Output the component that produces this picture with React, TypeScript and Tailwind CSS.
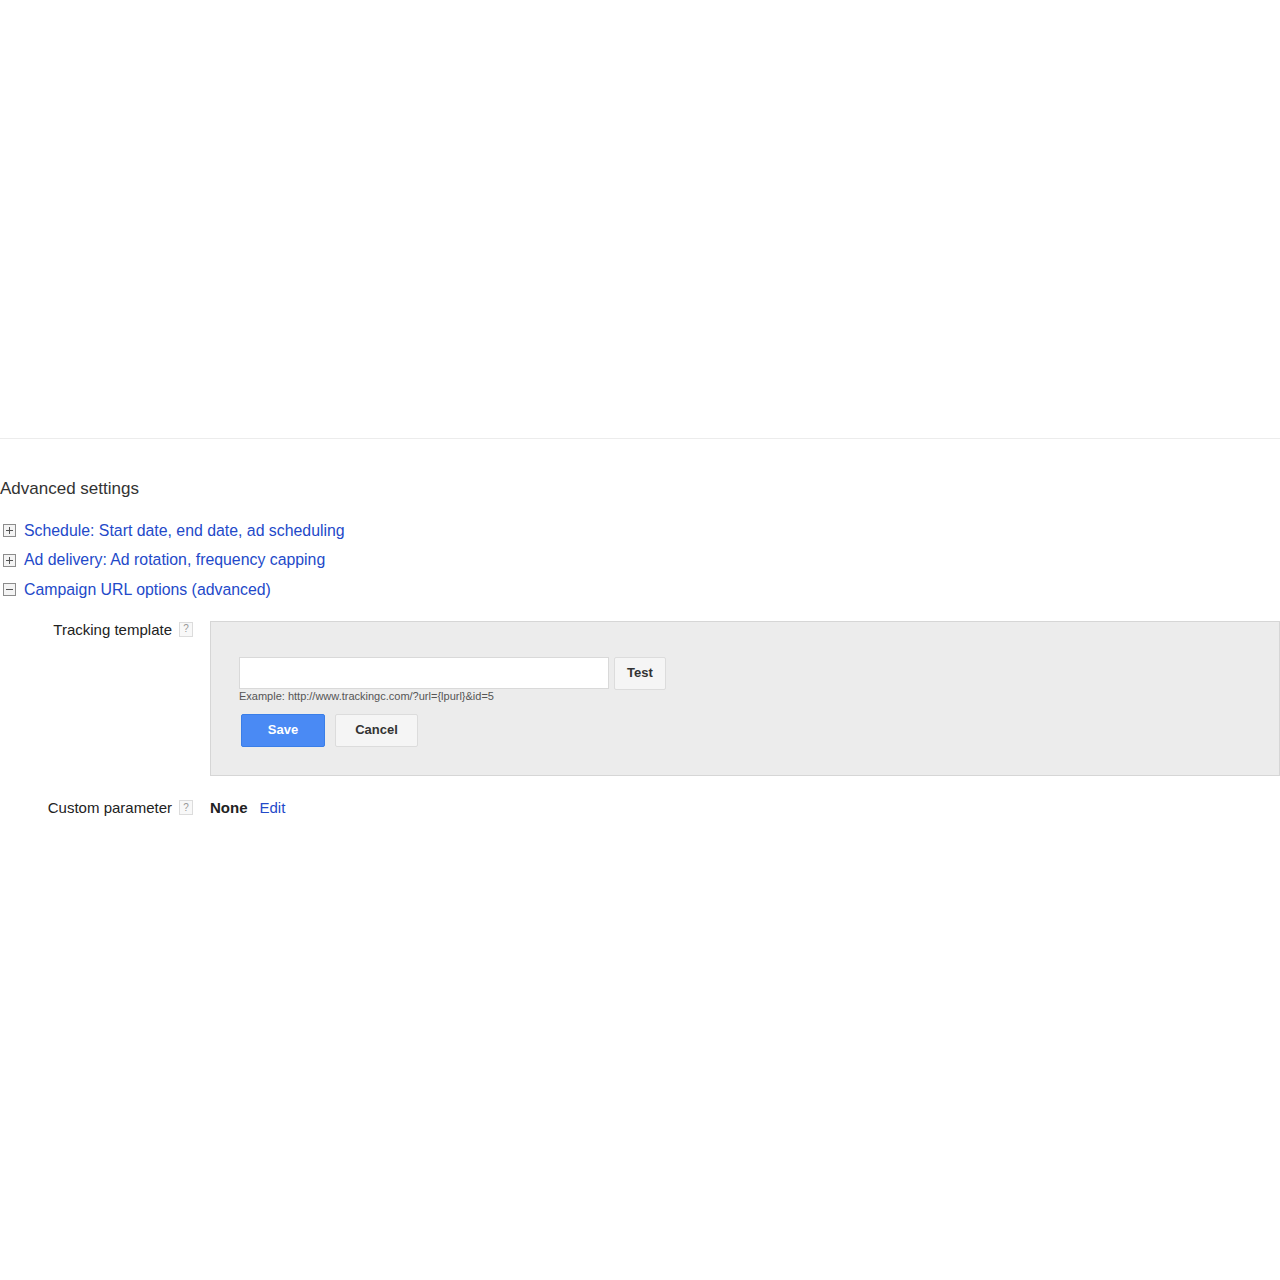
const font = { fontFamily: '"Liberation Sans", Arial, sans-serif' };

const Toggle = ({ open }: { open?: boolean }) => (
  <svg width="13" height="13" viewBox="0 0 13 13" className="shrink-0">
    <rect x="0.5" y="0.5" width="12" height="12" fill="#f4f4f4" stroke="#8c8c8c" />
    <line x1="3" y1="6.5" x2="10" y2="6.5" stroke="#555" strokeWidth="1" />
    {!open && <line x1="6.5" y1="3" x2="6.5" y2="10" stroke="#555" strokeWidth="1" />}
  </svg>
);

const Help = () => (
  <span className="inline-flex h-[15px] w-[14px] items-center justify-center border border-[#dcdcdc] bg-[#f8f8f8] text-[10px] leading-none text-[#999]">
    ?
  </span>
);

const Btn = ({ children, primary, w }: { children: string; primary?: boolean; w: string }) => (
  <button
    className={
      primary
        ? `h-[33px] ${w} rounded-[2px] border border-[#3a7ee8] bg-[#4a8af4] text-[13px] font-bold text-white`
        : `h-[33px] ${w} rounded-[2px] border border-[#dcdcdc] bg-[#f5f5f5] text-[13px] font-bold text-[#333]`
    }
  >
    {children}
  </button>
);

export default function App() {
  return (
    <div className="min-h-[1280px] bg-white text-[#222]" style={font}>
      <div className="h-[438px]" />
      <div className="h-px bg-[#ececec]" />

      <h2 className="mt-[40px] text-[17px] leading-[20px] text-[#333]">Advanced settings</h2>

      <div className="mt-[17px] flex flex-col">
        {[
          ['Schedule: Start date, end date, ad scheduling', false],
          ['Ad delivery: Ad rotation, frequency capping', false],
          ['Campaign URL options (advanced)', true],
        ].map(([t, o]) => (
          <div key={t as string} className="flex h-[29.5px] items-center gap-[8px] pl-[3px]">
            <Toggle open={o as boolean} />
            <a className="text-[15.85px] leading-[20px] text-[#2349c9]">{t as string}</a>
          </div>
        ))}
      </div>

      <div className="mt-[16px] flex">
        <div className="flex w-[193px] shrink-0 items-start justify-end gap-[7px] pt-[1px]">
          <span className="text-[15px] leading-[16px] text-[#222]">Tracking template</span>
          <Help />
        </div>
        <div className="ml-[17px] flex-1 border border-[#d6d6d6] bg-[#ececec] pb-[28px] pl-[28px] pt-[35px]">
          <div className="flex gap-[5px]">
            <input className="h-[32px] w-[370px] border border-[#d9d9d9] bg-white px-2 outline-none" />
            <Btn w="w-[52px]">Test</Btn>
          </div>
          <div className="text-[11px] leading-[13px] text-[#555]">
            Example: http://www.trackingc.com/?url={'{lpurl}'}&amp;id=5
          </div>
          <div className="ml-[2px] mt-[11px] flex gap-[10px]">
            <Btn primary w="w-[84px]">Save</Btn>
            <Btn w="w-[83px]">Cancel</Btn>
          </div>
        </div>
      </div>

      <div className="mt-[21px] flex items-center">
        <div className="flex w-[193px] shrink-0 items-center justify-end gap-[7px]">
          <span className="text-[15px] leading-[16px] text-[#222]">Custom parameter</span>
          <Help />
        </div>
        <span className="ml-[17px] text-[15px] font-bold text-[#222]">None</span>
        <a className="ml-[12px] text-[15px] text-[#2349c9]">Edit</a>
      </div>
    </div>
  );
}
